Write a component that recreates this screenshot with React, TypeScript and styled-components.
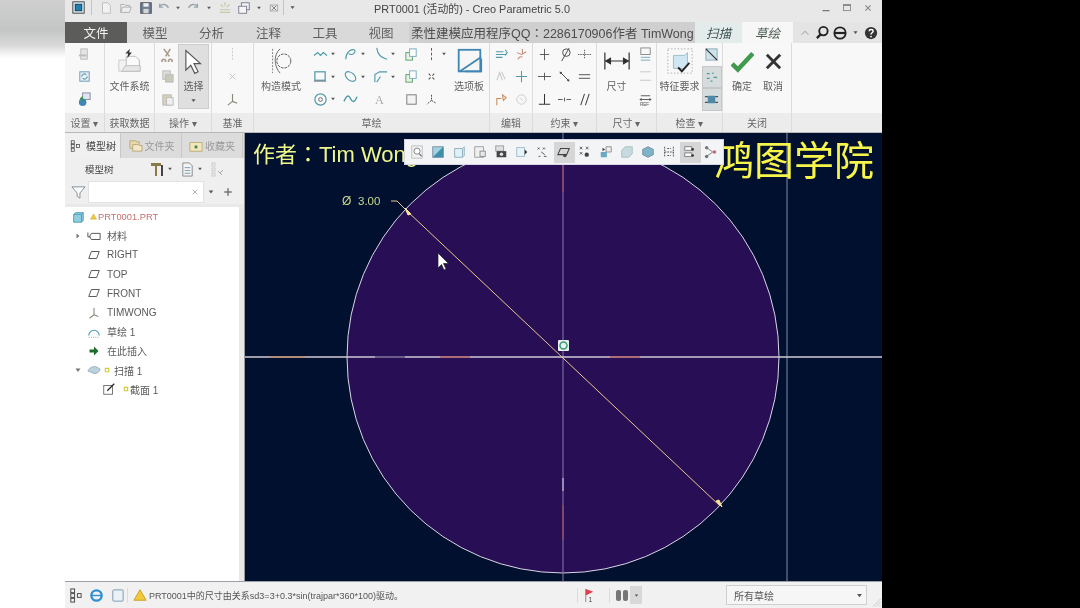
import React from "react";
import styled, { createGlobalStyle } from "styled-components";

const GlobalStyle = createGlobalStyle`
  html, body { margin: 0; padding: 0; background: #000; }
  body { font-family: "Liberation Sans", "Noto Sans CJK SC", sans-serif; }
  * { box-sizing: border-box; }
`;

const BLUE = "#3f86b4";
const TEAL = "#4e9aa8";

const icons: Record<string, React.ReactNode> = {
  app: (<><rect x="1" y="1" width="14" height="14" fill="#cfe0ea" stroke="#333" /><rect x="4" y="4" width="8" height="8" fill="#1f7fb5" stroke="#134" /></>),
  newFile: <path d="M4 2h6l3 3v9H4z" fill="#f2f2f2" stroke="#b9b9b9" />,
  open: <path d="M2 13V4h4l1 1h5v2M2 13l2-6h10l-2 6z" fill="#eee" stroke="#aaa" />,
  save: (<><rect x="2" y="2" width="12" height="12" fill="#6d7f95" stroke="#445" /><rect x="5" y="2.5" width="6" height="4" fill="#eee" /><rect x="5" y="9" width="6" height="5" fill="#d5d5d5" /></>),
  undo: <path d="M3 6c3-3 8-3 10 2M3 3v4h4" fill="none" stroke="#9aa5ad" strokeWidth="1.5" />,
  redo: <path d="M13 6c-3-3-8-3-10 2M13 3v4H9" fill="none" stroke="#9aa5ad" strokeWidth="1.5" />,
  regen: <path d="M8 1v5M3 4l3 3M13 4l-3 3M2 10h12M2 13h12" fill="none" stroke="#c8c8a8" strokeWidth="1.3" />,
  windows: (<><rect x="5" y="2" width="9" height="8" fill="#eef3f5" stroke="#778" /><rect x="2" y="6" width="9" height="8" fill="#f5f5f5" stroke="#778" /></>),
  closeWin: (<><rect x="3" y="4" width="10" height="8" fill="none" stroke="#999" /><path d="M5 5l6 6M11 5l-6 6" stroke="#666" /></>),
  winMin: <path d="M4 11h8" stroke="#777" strokeWidth="1.4" />,
  winMax: (<><rect x="4" y="4" width="8" height="7" fill="none" stroke="#888" /><path d="M4 5h8" stroke="#888" strokeWidth="1.4" /></>),
  winClose: <path d="M5 5l6 6M11 5l-6 6" stroke="#888" strokeWidth="1.3" />,
  caret: <path d="M5 6h6l-3 4z" fill="#555" />,
  tri: <path d="M5 3l6 5-6 5z" fill="#777" />,
  triDown: <path d="M3 5h10l-5 7z" fill="#777" />,
  search: (<><circle cx="9" cy="6.5" r="4.5" fill="none" stroke="#222" strokeWidth="2" /><path d="M6 10l-4 4" stroke="#222" strokeWidth="2.4" /></>),
  globe: (<><circle cx="8" cy="8" r="6.5" fill="none" stroke="#222" strokeWidth="2" /><path d="M2 8h12" stroke="#222" strokeWidth="2.5" /></>),
  help: (<><circle cx="8" cy="8" r="7" fill="#333" /><path d="M5.8 6c.2-2.6 4.6-2.6 4.6 0 0 1.7-2.4 1.7-2.4 3.6" fill="none" stroke="#fff" strokeWidth="1.7" /><circle cx="8" cy="12" r="1" fill="#fff" /></>),
  up: <path d="M4 10l4-4 4 4" fill="none" stroke="#aaa" strokeWidth="1.2" />,
  regenGrey: (<><rect x="4" y="2" width="7" height="11" fill="#e4e4e4" stroke="#bbb" /><path d="M2 9h8" stroke="#bbb" strokeWidth="2" /></>),
  refresh: (<><rect x="3" y="3" width="10" height="10" fill="#e8eef2" stroke="#6a9ab8" /><path d="M5 8a3 3 0 0 1 5-2M11 8a3 3 0 0 1-5 2" fill="none" stroke="#2f7fa8" /></>),
  setup: (<><rect x="6" y="1" width="8" height="7" fill="#dfe7ec" stroke="#88a" /><circle cx="6" cy="11" r="4" fill={BLUE} /><path d="M3 7l3-3v6z" fill="#3a8f48" /></>),
  fileSys: (<><path d="M3 14h22v12H3z" fill="#f2f2f2" stroke="#ccc" /><path d="M11 10h10l4 4v8H11z" fill="#fafafa" stroke="#bbb" /><path d="M10 20h16v6H6z" fill="#e6e6e6" stroke="#bbb" /><path d="M15 2l-5 5h3l-1 5 5-6h-3l1-4z" fill="#333" /></>),
  scissors: <path d="M4 2l6 8M11 2L6 10M4 13a2 2 0 1 0 .1 0M11 13a2 2 0 1 0 .1 0" fill="none" stroke="#a89a8a" strokeWidth="1.7" />,
  copy: (<><rect x="3" y="2" width="8" height="9" fill="#ddd" stroke="#bbb" /><rect x="6" y="6" width="8" height="8" fill="#c9c9b9" stroke="#bbb" /></>),
  paste: (<><rect x="3" y="3" width="9" height="11" fill="#d8cfb8" stroke="#bbb" /><rect x="7" y="6" width="7" height="8" fill="#eee" stroke="#bbb" /></>),
  pointer: <path d="M6 2v24l6-6 5 10 4-2-5-10h8z" fill="#fff" stroke="#555" strokeWidth="1.4" />,
  dashV: <path d="M8 1v14" stroke="#c9c9c9" strokeDasharray="2 1.5" />,
  xSmall: <path d="M5 5l6 6M11 5l-6 6" stroke="#c4c4c4" />,
  csys: <path d="M8 2v8M8 10l5 2M8 10l-5 4" fill="none" stroke="#887" strokeWidth="1.2" />,
  construct: (<><path d="M6 2v26" stroke="#777" strokeDasharray="2 1.5" /><path d="M14 2C7 8 7 20 14 28" fill="none" stroke="#666" /><circle cx="18" cy="15" r="7.5" fill="none" stroke="#555" strokeDasharray="3 1" /></>),
  line: <path d="M1 9l4-3 3 3 3-3 4 3" fill="none" stroke={TEAL} strokeWidth="1.3" />,
  arc: <path d="M3 13C3 6 8 2 12 3c2 1 0 5-3 5-2 0-3-1-3-1" fill="none" stroke={TEAL} strokeWidth="1.2" />,
  fillet: <path d="M4 1c1 8 5 11 11 12" fill="none" stroke={TEAL} strokeWidth="1.2" />,
  offset: (<><rect x="2" y="6" width="7" height="8" fill="#e7f1e4" stroke="#5ba06b" /><rect x="6" y="2" width="7" height="8" fill="#fff" stroke="#7ab" /></>),
  centerLine: <path d="M8 1v14" stroke="#555" strokeDasharray="3 2" />,
  rect: (<><rect x="2" y="3" width="11" height="9" fill="none" stroke={TEAL} strokeWidth="1.3" /><path d="M1 13h13" stroke="#777" /></>),
  ellipse: <ellipse cx="8" cy="8" rx="6.5" ry="4" transform="rotate(40 8 8)" fill="none" stroke={TEAL} strokeWidth="1.2" />,
  chamfer: <path d="M2 14V6l5-3h8M8 8l-4 6" fill="none" stroke={TEAL} strokeWidth="1.2" />,
  cross: <path d="M5 5l2 2M11 5L9 7M5 11l2-2M11 11L9 9" stroke="#555" strokeWidth="1.1" />,
  circleC: (<><circle cx="8" cy="8" r="6" fill="none" stroke={TEAL} strokeWidth="1.3" /><circle cx="8" cy="8" r="2" fill="none" stroke="#666" /></>),
  spline: <path d="M1 10c3-7 5-7 7-3s4 5 7-2" fill="none" stroke={TEAL} strokeWidth="1.5" />,
  text: <text x="2" y="13" fontSize="13" fontFamily="Liberation Serif, serif" fill="#aaa">A</text>,
  sqr: <rect x="3" y="3" width="10" height="10" fill="#f3f3f3" stroke="#777" />,
  axes: <path d="M8 3v6M8 9l5 3M8 9l-5 4" fill="none" stroke="#444" strokeDasharray="2 1" />,
  palette: (<><rect x="3" y="2" width="24" height="24" fill="#f6f6f6" stroke={BLUE} strokeWidth="2" /><path d="M4 26L28 10M10 26h18V12" fill="none" stroke={BLUE} strokeWidth="2" /></>),
  mirror: <path d="M2 5h8M2 8h10M2 11h7M12 3l2 3-2 3" fill="none" stroke={TEAL} strokeWidth="1.2" />,
  divide: <path d="M9 2v6M3 6l5 2 5-3M4 13c2-3 4-3 5-2" fill="none" stroke="#c98a78" strokeWidth="1.1" />,
  trim: <path d="M3 12l3-8 3 8M8 3l4 8" fill="none" stroke="#c8c8c8" strokeWidth="1.1" />,
  plusTeal: <path d="M8 2v12M2 8h12" stroke={TEAL} strokeWidth="1.1" />,
  corner: <path d="M3 14V7h5M9 3l4 3-3 3z" fill="none" stroke="#c98a58" strokeWidth="1.1" />,
  rotate: (<><circle cx="8" cy="8" r="5" fill="none" stroke="#ccc" /><path d="M6 6l4 4" stroke="#ccc" /></>),
  vert: <path d="M8 2v12M3 8h10" stroke="#444" strokeWidth=".9" />,
  tangent: (<><circle cx="10" cy="6" r="4" fill="none" stroke="#444" /><path d="M13 1L5 15" stroke="#444" /></>),
  mid: <path d="M1 8h14M8 3v10" stroke="#555" strokeDasharray="1.5 1" />,
  horiz: <path d="M1 8h14M8 4v8" stroke="#444" strokeWidth=".9" />,
  coinc: (<><path d="M3 3l10 10" stroke="#444" /><circle cx="4" cy="4" r="1.2" fill="#444" /><circle cx="12" cy="12" r="1.2" fill="#444" /></>),
  equal: <path d="M2 6h12M2 10h12" stroke="#777" strokeWidth="1.1" />,
  perp: <path d="M8 2v11M2 13h12" stroke="#333" strokeWidth="1.1" />,
  sym: <path d="M1 8h5M10 8h5M8 6v4" stroke="#555" />,
  parallel: <path d="M4 14l4-12M9 14l4-12" stroke="#444" strokeWidth="1.1" />,
  dimension: <path d="M2 6v18M28 6v18M3 15h24M3 15l5-3v6zM27 15l-5-3v6z" fill="#222" stroke="#333" strokeWidth="1.3" />,
  perim: (<><rect x="3" y="1" width="10" height="7" fill="none" stroke="#888" /><path d="M3 11h10M3 14h10" stroke="#7ab" /></>),
  baseline: <path d="M2 12h12M2 3h12" stroke="#c8c8c8" />,
  ref: (<><path d="M3 4h10M4 7l-2 1 2 1M12 7l2 1-2 1M2 8h12" stroke="#555" fill="none" /><text x="2" y="15" fontSize="5" fontFamily="Liberation Sans, sans-serif" fill="#555">REF</text></>),
  feature: (<><rect x="2" y="2" width="26" height="26" fill="none" stroke="#aaa" strokeDasharray="1.5 2" /><path d="M8 9h12l3-3v14l-3 3H8z" fill="#cfe6f3" stroke="#9bc" /><path d="M13 22l4 4 8-9" fill="none" stroke="#222" strokeWidth="2" /></>),
  inspect1: (<><rect x="2" y="2" width="12" height="12" fill="#cfe2ea" stroke="#8ab" /><path d="M2 2l12 12" stroke="#333" strokeWidth="1.3" /></>),
  inspect2: <path d="M3 5h3M3 10h3M9 4l1 1M10 9h4M7 13h2" stroke="#4e9aa8" strokeWidth="1.4" />,
  inspect3: (<><rect x="4" y="4" width="8" height="8" fill="#4e8aa8" /><path d="M1 5h3M1 11h3M12 5h3M12 11h3" stroke="#222" /></>),
  ok: <path d="M1 12l5 5L19 3" fill="none" stroke="#3f9a4e" strokeWidth="4" />,
  cancel: <path d="M3 3l14 14M17 3L3 17" stroke="#333" strokeWidth="3" />,
  treeTab: (<><rect x="3" y="1" width="4" height="4" fill="none" stroke="#444" /><rect x="3" y="6" width="4" height="4" fill="none" stroke="#444" /><rect x="3" y="11" width="4" height="4" fill="none" stroke="#444" /><rect x="10" y="6" width="4" height="4" fill="none" stroke="#444" /></>),
  folders: (<><path d="M2 3h6l1 1h3v7H2z" fill="#e9d8a8" stroke="#b8a878" /><path d="M5 7h6l1 1h3v6H5z" fill="#f1e6c8" stroke="#b8a878" /></>),
  favorites: (<><path d="M1 4h14v10H1z" fill="#f3e6b8" stroke="#b8a878" /><circle cx="8" cy="9" r="1.8" fill="#3c8a5a" /></>),
  tools: (<><path d="M2 2h10v3H8v10H6V5H2z" fill="#8a7a4a" /><path d="M12 4h2v11h-2z" fill="#444" /></>),
  list: (<><path d="M3 1h7l3 3v11H3z" fill="#f4f4f4" stroke="#888" /><path d="M5 6h6M5 9h6M5 12h6" stroke="#7a9ab0" /></>),
  treeOff: (<><rect x="2" y="2" width="3" height="3" fill="none" stroke="#ccc" /><rect x="2" y="7" width="3" height="3" fill="none" stroke="#ccc" /><rect x="2" y="12" width="3" height="3" fill="none" stroke="#ccc" /><path d="M8 10l4 4M13 9l-3 3" stroke="#aaa" /></>),
  funnel: <path d="M1 2h14L9.5 8.5V14L6.5 12V8.5z" fill="#fff" stroke="#7e8b96" />,
  xGrey: <path d="M5 5l6 6M11 5l-6 6" stroke="#999" />,
  plusGrey: <path d="M8 3v10M3 8h10" stroke="#777" strokeWidth="2" />,
  part: <path d="M3 5l2-2h9v9l-2 2H3zM3 5h9v9M12 5l2-2" fill="#8fcde0" stroke="#4a9cb5" />,
  warn: <path d="M8 2l7 12H1z" fill="#f0c93c" stroke="#c79a1c" />,
  tag: <path d="M1 4v5h3M5 5h10v7H5L3 8.5z" fill="none" stroke="#444" />,
  plane: <path d="M5 4h9l-3 8H2z" fill="none" stroke="#555" strokeWidth="1.1" />,
  sketch: (<><path d="M2 12a6 6 0 0 1 12 0" fill="none" stroke="#4a9cb5" strokeWidth="1.3" /><path d="M2 14h12" stroke="#888" strokeDasharray="1 1.5" /></>),
  insert: <path d="M2 6h6V2l6 6-6 6v-4H2z" fill="#1f6b2c" />,
  sweep: <path d="M1 9c2-4 5-5 9-5l5 3c-1 4-4 5-7 5z" fill="#b9d2dc" stroke="#9ab" />,
  section: (<><rect x="2" y="4" width="10" height="10" fill="#fff" stroke="#666" /><path d="M6 10l8-8" stroke="#222" strokeWidth="1.5" /></>),
  star: <path d="M2 2h12v12H2z M5 5h6v6H5z" fill="#d3c93a" fillRule="evenodd" />,
  tbZoom: (<><rect x="2" y="1" width="12" height="14" fill="#f2f2f2" stroke="#bbb" /><circle cx="8" cy="7" r="3.5" fill="#fff" stroke="#777" /><path d="M10.5 10l3 3" stroke="#777" strokeWidth="1.4" /></>),
  tbFit: (<><rect x="2" y="2" width="12" height="12" fill="#9ed2e4" stroke="#789" /><path d="M2 14L14 2v12z" fill="#3f8fa8" /></>),
  tbBox: <path d="M3 4h9l2-2v10l-2 2H3zM12 4v10" fill="#dff0f6" stroke="#8ab" />,
  tbSheet: (<><rect x="2" y="2" width="10" height="12" fill="#f0f0f0" stroke="#999" /><rect x="8" y="7" width="6" height="6" fill="#e8e8e8" stroke="#888" /></>),
  tbCam: (<><rect x="2" y="1" width="9" height="6" fill="#e0e0e0" stroke="#999" /><rect x="3" y="7" width="11" height="7" fill="#444" /><circle cx="8.5" cy="10.5" r="2" fill="#ddd" /></>),
  tbPlay: (<><rect x="2" y="3" width="9" height="10" fill="#e7f3f7" stroke="#9bc" /><path d="M11 5l3 3-3 3z" fill="#333" /></>),
  tbScatter: <path d="M2 3l2 2M4 3L2 5M8 3l2 2M10 3L8 5M6 8l4 3M3 13h2M9 13h3" stroke="#444" />,
  tbPlane: (<><path d="M4 4h10l-3 7H1z" fill="none" stroke="#444" strokeWidth="1.2" /><circle cx="9" cy="12" r="2" fill="#444" /></>),
  tbCross: (<><path d="M2 2l3 3M5 2L2 5M9 2l3 3M12 2L9 5M2 8l3 3M5 8l-3 3" stroke="#555" /><circle cx="10" cy="11" r="2.5" fill="#444" /></>),
  tbSwap: (<><path d="M8 2h6v6H8z" fill="#eee" stroke="#888" /><path d="M2 8h7v6H2z" fill="#66a9c4" /><path d="M4 3l3 2-3 2z" fill="#444" /></>),
  tbSolid: <path d="M2 6l4-4h8v8l-4 4H2z" fill="#c5dbe0" stroke="#aabcc0" />,
  tbCube: <path d="M2 5l6-3 6 3v6l-6 3-6-3z" fill="#7fb3c9" stroke="#6c8a9c" />,
  tbDim: <path d="M3 2v12M13 2v12M3 8h10M6 4h4M6 12h4" stroke="#444" strokeDasharray="2 1" />,
  tbLock: (<><rect x="2" y="2" width="8" height="4" fill="#fff" stroke="#777" /><circle cx="11" cy="5" r="1.5" fill="#333" /><rect x="2" y="9" width="8" height="4" fill="#fff" stroke="#777" /><circle cx="11" cy="12" r="1.5" fill="#333" /></>),
  tbNodes: (<><path d="M3 3l7 5-7 5" fill="none" stroke="#777" /><circle cx="3" cy="3" r="2" fill="#777" /><circle cx="3" cy="13" r="2" fill="#777" /><circle cx="12" cy="8" r="2" fill="#c56a6a" /></>),
  ie: (<><circle cx="8" cy="8" r="5.5" fill="none" stroke="#2f8fd0" strokeWidth="2.5" /><path d="M3 8h10" stroke="#2f8fd0" strokeWidth="1.5" /></>),
  page: <rect x="3" y="2" width="11" height="12" rx="1" fill="#eaf2f6" stroke="#7898b0" />,
  flag: (<><path d="M4 1v14" stroke="#888" /><path d="M4 1l8 3-8 4z" fill="#e0404a" /><text x="7" y="15" fontSize="7" fontFamily="Liberation Sans, sans-serif" fill="#444">1</text></>),
  binoculars: (<><rect x="2" y="3" width="5" height="11" rx="2" fill="#777" /><rect x="9" y="3" width="5" height="11" rx="2" fill="#777" /></>),
  grip: <path d="M4 14L14 4M8 14l6-6M12 14l2-2" stroke="#bbb" />,
};

const Svg = styled.svg<{ $size: number }>`
  width: ${(p) => p.$size}px;
  height: ${(p) => p.$size}px;
  flex: none;
  display: block;
`;

function Ico({ name, size = 14, box = 16 }: { name: string; size?: number; box?: number }) {
  return (
    <Svg $size={size} viewBox={`0 0 ${box} ${box}`}>
      {icons[name]}
    </Svg>
  );
}

const Spacer = styled.span<{ $w: number }>`
  width: ${(p) => p.$w}px;
  flex: none;
`;

/* ---------- page frame ---------- */
const Page = styled.div`
  width: 1080px;
  height: 608px;
  display: flex;
  overflow: hidden;
  background: #000;
`;

const LeftStrip = styled.div`
  width: 65px;
  background: linear-gradient(#cfcfcf 0, #c4c6c5 30px, #d8d8d8 45px, #fff 58px);
`;

const Window = styled.div`
  width: 817px;
  display: flex;
  flex-direction: column;
  background: #f0f0f0;
  filter: blur(0.5px);
`;

/* ---------- title bar ---------- */
const TitleBar = styled.div`
  height: 22px;
  padding-bottom: 7px;
  display: flex;
  align-items: center;
  background: #e7e8e7;
`;

const Quick = styled.div<{ $w: number }>`
  width: ${(p) => p.$w}px;
  display: flex;
  justify-content: center;
  flex: none;
`;

const QuickSep = styled.div`
  width: 1px;
  height: 15px;
  background: #c4c4c4;
  flex: none;
`;

const TitleText = styled.div`
  width: 280px;
  margin-left: 31px;
  text-align: center;
  color: #444;
  font-size: 10.9px;
  white-space: nowrap;
  flex: none;
`;

const WinButtons = styled.div`
  margin-left: 207px;
  display: flex;
  gap: 7px;
`;

/* ---------- tabs ---------- */
const TabStrip = styled.div`
  height: 21px;
  display: flex;
  align-items: stretch;
  background: #e4e4e4;
`;

const Tab = styled.div<{ $w: number; $kind?: string }>`
  width: ${(p) => p.$w}px;
  flex: none;
  display: flex;
  align-items: center;
  justify-content: center;
  white-space: nowrap;
  font-size: 12.5px;
  color: #5e5e5e;
  ${(p) => p.$kind === "file" && "background:#5c5c5a;color:#f2f2f2;"}
  ${(p) => p.$kind === "plain" && "background:#d9d9d9;"}
  ${(p) => p.$kind === "long" && `background:#cfcfcf;color:#4c4c4c;justify-content:flex-start;padding-left:2px;font-family:"Liberation Sans","Noto Sans CJK TC",sans-serif;`}
  ${(p) => p.$kind === "sweep" && "background:#e3ebeb;font-style:italic;color:#3c5050;"}
  ${(p) => p.$kind === "active" && "background:#f7f7f7;font-style:italic;color:#4b5a50;"}
`;

const TabTools = styled.div`
  display: flex;
  align-items: center;
  gap: 3px;
  padding-left: 5px;
`;

/* ---------- ribbon ---------- */
const Ribbon = styled.div`
  height: 90px;
  display: flex;
  background: #f8f8f8;
  border-bottom: 1px solid #b8b8b8;
`;

const Group = styled.div<{ $w: number; $flat?: boolean }>`
  width: ${(p) => p.$w}px;
  flex: none;
  display: flex;
  flex-direction: column;
  border-right: ${(p) => (p.$flat ? "none" : "1px solid #dcdcdc")};
`;

const GroupBody = styled.div<{ $start?: boolean }>`
  height: 70px;
  display: flex;
  justify-content: ${(p) => (p.$start ? "flex-start" : "center")};
`;

const GroupLabel = styled.div`
  flex: 1;
  background: #ececec;
  display: flex;
  align-items: center;
  justify-content: center;
  color: #666;
  font-size: 10px;
  white-space: nowrap;
`;

const IconCol = styled.div<{ $w?: number; $ml?: number }>`
  width: ${(p) => p.$w ?? 20}px;
  margin-left: ${(p) => p.$ml ?? 0}px;
  flex: none;
  display: flex;
  flex-direction: column;
`;

const IconCell = styled.div<{ $on?: boolean }>`
  height: 22.5px;
  display: flex;
  align-items: center;
  justify-content: center;
  background: ${(p) => (p.$on ? "#d6dbdc" : "transparent")};
  outline: ${(p) => (p.$on ? "1px solid #c4c8c8" : "none")};
  outline-offset: -1px;
`;

const SketchRow = styled.div`
  height: 22.5px;
  display: grid;
  grid-template-columns: 30px 30px 31px 20px 28px;
  align-items: center;
  justify-items: start;
`;

const WithCaret = styled.div`
  display: flex;
  align-items: center;
`;

const BigButton = styled.div<{ $w: number }>`
  width: ${(p) => p.$w}px;
  flex: none;
  display: flex;
  flex-direction: column;
  align-items: center;
`;

const BigIcon = styled.div`
  height: 36px;
  display: flex;
  align-items: center;
  justify-content: center;
`;

const BigLabel = styled.div`
  height: 16px;
  line-height: 16px;
  font-size: 10px;
  color: #606060;
  white-space: nowrap;
`;

const SelectButton = styled(BigButton)`
  margin: 1px 0 2px;
  height: 65px;
  background: #dedfde;
  border: 1px solid #cdcdcd;

  ${BigIcon} {
    height: 34px;
  }
`;

function Small({ name, on }: { name: string; on?: boolean }) {
  return (
    <IconCell $on={on}>
      <Ico name={name} size={15} />
    </IconCell>
  );
}

function Big({ w, icon, size, box, label }: { w: number; icon: string; size: number; box: number; label: string }) {
  return (
    <BigButton $w={w}>
      <BigIcon>
        <Ico name={icon} size={size} box={box} />
      </BigIcon>
      <BigLabel>{label}</BigLabel>
    </BigButton>
  );
}

const sketchRows: [string, boolean][][] = [
  [["line", true], ["arc", true], ["fillet", true], ["offset", false], ["centerLine", true]],
  [["rect", true], ["ellipse", true], ["chamfer", true], ["offset", false], ["cross", false]],
  [["circleC", true], ["spline", false], ["text", false], ["sqr", false], ["axes", false]],
];

/* ---------- main area ---------- */
const Main = styled.div`
  height: 448px;
  display: flex;
`;

const Sidebar = styled.div`
  width: 180px;
  flex: none;
  display: flex;
  flex-direction: column;
  background: #e9e9e9;
  border-right: 1px solid #9a9a9a;
`;

const SideTabs = styled.div`
  height: 25px;
  display: flex;
  background: #dcdcdc;
`;

const SideTab = styled.div<{ $w: number; $on?: boolean }>`
  width: ${(p) => p.$w}px;
  display: flex;
  align-items: center;
  justify-content: center;
  gap: ${(p) => (p.$on ? "5px" : "2px")};
  font-size: 10px;
  color: ${(p) => (p.$on ? "#444" : "#9a9a9a")};
  background: ${(p) => (p.$on ? "#f0f0f0" : "#dcdcdc")};
  border-right: 1px solid #c8c8c8;
  white-space: nowrap;
  overflow: hidden;
`;

const SideTools = styled.div`
  height: 22px;
  display: flex;
  align-items: center;
  padding-left: 20px;
  background: #efefef;
  color: #444;
  font-size: 9.5px;
`;

const SideToolsTitle = styled.div`
  width: 64px;
`;

const FilterRow = styled.div`
  height: 24px;
  display: flex;
  align-items: center;
  padding-left: 6px;
  gap: 1px;
  background: #efefef;
`;

const FilterInput = styled.div`
  width: 116px;
  height: 22px;
  margin-left: 1px;
  background: #fff;
  border: 1px solid #e2e2e2;
  display: flex;
  align-items: center;
  justify-content: flex-end;
  padding-right: 2px;
`;

const Tree = styled.div`
  flex: 1;
  margin: 3px 5px 0 0;
  background: #fff;
`;

const TreeRow = styled.div`
  height: 19.2px;
  display: flex;
  align-items: center;
  font-size: 10px;
  color: #5a5a5a;
  white-space: nowrap;
`;

const Arrow = styled.div`
  width: 8px;
  margin-left: 9px;
  margin-right: 4px;
  display: flex;
  justify-content: center;
  flex: none;
`;

const RowIcon = styled.div<{ $ml?: number; $mr?: number }>`
  width: 16px;
  margin-left: ${(p) => p.$ml ?? 0}px;
  margin-right: ${(p) => p.$mr ?? 5}px;
  display: flex;
  justify-content: center;
  flex: none;
`;

const PartName = styled.span`
  color: #c56f6f;
  font-size: 9.3px;
`;

const Canvas = styled.div`
  flex: 1;
  position: relative;
  background: #02102f;
`;

const Drawing = styled.svg`
  display: block;
  width: 637px;
  height: 448px;
`;

const Author = styled.div`
  position: absolute;
  left: 8px;
  top: 6px;
  color: #eef78a;
  font-size: 22px;
  line-height: 32px;
  white-space: nowrap;
  font-family: "Liberation Sans", "Noto Sans CJK TC", sans-serif;
`;

const School = styled.div`
  position: absolute;
  right: 8px;
  top: 1px;
  color: #f7f54a;
  font-size: 40px;
  line-height: 48px;
  white-space: nowrap;
  font-family: "Noto Sans CJK SC", sans-serif;
`;

const FloatBar = styled.div`
  position: absolute;
  left: 159px;
  top: 6px;
  width: 320px;
  height: 26px;
  display: flex;
  align-items: center;
  padding-left: 1.5px;
  background: #f3f4f6;
  border: 1px solid #d9d5e6;
`;

const FloatCell = styled.div<{ $on?: boolean }>`
  width: 21px;
  height: 21px;
  flex: none;
  display: flex;
  align-items: center;
  justify-content: center;
  background: ${(p) => (p.$on ? "#d6d6d6" : "transparent")};
`;

/* ---------- status bar ---------- */
const StatusBar = styled.div`
  flex: 1;
  display: flex;
  align-items: center;
  background: #f1f1f1;
  border-top: 1px solid #9aa0a6;
`;

const StatusIcons = styled.div`
  width: 63px;
  flex: none;
  padding-left: 3px;
  display: flex;
  gap: 6px;
  border-right: 1px solid #dcdcdc;
`;

const Message = styled.div`
  width: 449px;
  flex: none;
  padding-left: 5px;
  display: flex;
  align-items: center;
  gap: 2px;
  font-size: 9px;
  color: #555;
  white-space: nowrap;
`;

const FlagCell = styled.div`
  width: 33px;
  flex: none;
  padding-left: 4px;
  display: flex;
  border-left: 1px solid #dcdcdc;
  border-right: 1px solid #dcdcdc;
`;

const FindCell = styled.div`
  width: 44px;
  flex: none;
  padding-left: 4px;
  display: flex;
  align-items: center;
`;

const FindCaret = styled.div`
  width: 12px;
  height: 18px;
  background: #d8d8d8;
  display: flex;
  align-items: center;
  justify-content: center;
`;

const FilterSelect = styled.div`
  width: 142px;
  height: 20px;
  margin-left: 72px;
  padding-left: 7px;
  display: flex;
  align-items: center;
  justify-content: space-between;
  background: #f6f6f6;
  border: 1px solid #cfcfcf;
  font-size: 10px;
  color: #555;
`;

const Grip = styled.div`
  margin-left: 3px;
  align-self: flex-end;
`;

const floatIcons: [string, boolean?][] = [
  ["tbZoom"], ["tbFit"], ["tbBox"], ["tbSheet"], ["tbCam"], ["tbPlay"], ["tbScatter"], ["tbPlane", true],
  ["tbCross"], ["tbSwap"], ["tbSolid"], ["tbCube"], ["tbDim"], ["tbLock", true], ["tbNodes"],
];

export default function App() {
  return (
    <Page>
      <GlobalStyle />
      <LeftStrip />
      <Window>
        <TitleBar>
          <Quick $w={26}><Ico name="app" size={13} /></Quick>
          <QuickSep />
          <Spacer $w={4} />
          <Quick $w={19}><Ico name="newFile" /></Quick>
          <Quick $w={21}><Ico name="open" /></Quick>
          <Quick $w={19}><Ico name="save" /></Quick>
          <Quick $w={18}><Ico name="undo" /></Quick>
          <Quick $w={10}><Ico name="caret" size={10} /></Quick>
          <Quick $w={20}><Ico name="redo" /></Quick>
          <Quick $w={12}><Ico name="caret" size={10} /></Quick>
          <Quick $w={20}><Ico name="regen" /></Quick>
          <Quick $w={17}><Ico name="windows" /></Quick>
          <Quick $w={13}><Ico name="caret" size={10} /></Quick>
          <Quick $w={18}><Ico name="closeWin" size={12} /></Quick>
          <QuickSep />
          <Quick $w={17}><Ico name="caret" size={11} /></Quick>
          <TitleText>PRT0001 (活动的) - Creo Parametric 5.0</TitleText>
          <WinButtons>
            <Ico name="winMin" />
            <Ico name="winMax" />
            <Ico name="winClose" />
          </WinButtons>
        </TitleBar>

        <TabStrip>
          <Tab $w={62} $kind="file">文件</Tab>
          <Tab $w={56} $kind="plain">模型</Tab>
          <Tab $w={57} $kind="plain">分析</Tab>
          <Tab $w={57} $kind="plain">注释</Tab>
          <Tab $w={56} $kind="plain">工具</Tab>
          <Tab $w={56} $kind="plain">视图</Tab>
          <Tab $w={286} $kind="long">柔性建模应用程序QQ：2286170906作者 TimWong</Tab>
          <Tab $w={47} $kind="sweep">扫描</Tab>
          <Tab $w={51} $kind="active">草绘</Tab>
          <TabTools>
            <Ico name="up" size={14} />
            <Ico name="search" size={15} />
            <Ico name="globe" size={14} />
            <Ico name="caret" size={11} />
            <Ico name="help" size={14} />
          </TabTools>
        </TabStrip>

        <Ribbon>
          <Group $w={40}>
            <GroupBody>
              <IconCol>
                <Small name="regenGrey" />
                <Small name="refresh" />
                <Small name="setup" />
              </IconCol>
            </GroupBody>
            <GroupLabel>设置 ▾</GroupLabel>
          </Group>
          <Group $w={50}>
            <GroupBody>
              <Big w={50} icon="fileSys" size={28} box={30} label="文件系统" />
            </GroupBody>
            <GroupLabel>获取数据</GroupLabel>
          </Group>
          <Group $w={57}>
            <GroupBody>
              <IconCol $w={21}>
                <Small name="scissors" />
                <Small name="copy" />
                <Small name="paste" />
              </IconCol>
              <SelectButton $w={31}>
                <BigIcon>
                  <Ico name="pointer" size={26} box={32} />
                </BigIcon>
                <BigLabel>选择</BigLabel>
                <Ico name="caret" size={11} />
              </SelectButton>
            </GroupBody>
            <GroupLabel>操作 ▾</GroupLabel>
          </Group>
          <Group $w={42}>
            <GroupBody>
              <IconCol>
                <Small name="dashV" />
                <Small name="xSmall" />
                <Small name="csys" />
              </IconCol>
            </GroupBody>
            <GroupLabel>基准</GroupLabel>
          </Group>
          <Group $w={236}>
            <GroupBody $start>
              <Big w={54} icon="construct" size={28} box={30} label="构造模式" />
              <IconCol $w={139} $ml={4.5}>
                {sketchRows.map((row, i) => (
                  <SketchRow key={i}>
                    {row.map(([name, hasCaret], j) => (
                      <WithCaret key={j}>
                        <Ico name={name} size={15} />
                        {hasCaret && <Ico name="caret" size={10} />}
                      </WithCaret>
                    ))}
                  </SketchRow>
                ))}
              </IconCol>
              <Big w={35} icon="palette" size={27} box={30} label="选项板" />
            </GroupBody>
            <GroupLabel>草绘</GroupLabel>
          </Group>
          <Group $w={43}>
            <GroupBody>
              <IconCol>
                <Small name="mirror" />
                <Small name="trim" />
                <Small name="corner" />
              </IconCol>
              <IconCol>
                <Small name="divide" />
                <Small name="plusTeal" />
                <Small name="rotate" />
              </IconCol>
            </GroupBody>
            <GroupLabel>编辑</GroupLabel>
          </Group>
          <Group $w={64}>
            <GroupBody>
              <IconCol>
                <Small name="vert" />
                <Small name="horiz" />
                <Small name="perp" />
              </IconCol>
              <IconCol>
                <Small name="tangent" />
                <Small name="coinc" />
                <Small name="sym" />
              </IconCol>
              <IconCol>
                <Small name="mid" />
                <Small name="equal" />
                <Small name="parallel" />
              </IconCol>
            </GroupBody>
            <GroupLabel>约束 ▾</GroupLabel>
          </Group>
          <Group $w={60}>
            <GroupBody>
              <Big w={38} icon="dimension" size={28} box={30} label="尺寸" />
              <IconCol>
                <Small name="perim" />
                <Small name="baseline" />
                <Small name="ref" />
              </IconCol>
            </GroupBody>
            <GroupLabel>尺寸 ▾</GroupLabel>
          </Group>
          <Group $w={66}>
            <GroupBody>
              <Big w={44} icon="feature" size={28} box={30} label="特征要求" />
              <IconCol $w={20}>
                <Small name="inspect1" />
                <Small name="inspect2" on />
                <Small name="inspect3" on />
              </IconCol>
            </GroupBody>
            <GroupLabel>检查 ▾</GroupLabel>
          </Group>
          <Group $w={69}>
            <GroupBody>
              <Big w={32} icon="ok" size={23} box={20} label="确定" />
              <Big w={30} icon="cancel" size={19} box={20} label="取消" />
            </GroupBody>
            <GroupLabel>关闭</GroupLabel>
          </Group>
          <Group $w={90} $flat>
            <GroupBody />
            <GroupLabel />
          </Group>
        </Ribbon>

        <Main>
          <Sidebar>
            <SideTabs>
              <SideTab $w={56} $on><Ico name="treeTab" size={12} />模型树</SideTab>
              <SideTab $w={61}><Ico name="folders" size={15} />文件夹</SideTab>
              <SideTab $w={61}><Ico name="favorites" size={14} />收藏夹</SideTab>
            </SideTabs>
            <SideTools>
              <SideToolsTitle>模型树</SideToolsTitle>
              <Ico name="tools" size={16} />
              <Ico name="caret" size={10} />
              <Spacer $w={5} />
              <Ico name="list" size={15} />
              <Ico name="caret" size={10} />
              <Spacer $w={5} />
              <Ico name="treeOff" size={16} />
            </SideTools>
            <FilterRow>
              <Ico name="funnel" size={15} />
              <FilterInput><Ico name="xGrey" size={12} /></FilterInput>
              <Ico name="caret" size={12} />
              <Spacer $w={3} />
              <Ico name="plusGrey" size={12} />
            </FilterRow>
            <Tree>
              <TreeRow>
                <RowIcon $ml={5} $mr={1}><Ico name="part" size={14} /></RowIcon>
                <Spacer $w={3} />
                <Ico name="warn" size={7} />
                <Spacer $w={1} />
                <PartName>PRT0001.PRT</PartName>
              </TreeRow>
              <TreeRow><Arrow><Ico name="tri" size={8} /></Arrow><RowIcon><Ico name="tag" /></RowIcon>材料</TreeRow>
              <TreeRow><Arrow /><RowIcon><Ico name="plane" /></RowIcon>RIGHT</TreeRow>
              <TreeRow><Arrow /><RowIcon><Ico name="plane" /></RowIcon>TOP</TreeRow>
              <TreeRow><Arrow /><RowIcon><Ico name="plane" /></RowIcon>FRONT</TreeRow>
              <TreeRow><Arrow /><RowIcon><Ico name="csys" /></RowIcon>TIMWONG</TreeRow>
              <TreeRow><Arrow /><RowIcon><Ico name="sketch" /></RowIcon>草绘 1</TreeRow>
              <TreeRow><Arrow /><RowIcon><Ico name="insert" size={12} /></RowIcon>在此插入</TreeRow>
              <TreeRow>
                <Arrow><Ico name="triDown" size={8} /></Arrow>
                <RowIcon $mr={2}><Ico name="sweep" /></RowIcon>
                <Ico name="star" size={6} />
                <Spacer $w={4} />
                扫描 1
              </TreeRow>
              <TreeRow>
                <Arrow />
                <RowIcon $ml={15} $mr={6}><Ico name="section" /></RowIcon>
                <Ico name="star" size={6} />
                <Spacer $w={1} />
                截面 1
              </TreeRow>
            </Tree>
          </Sidebar>
          <Canvas>
            <Drawing viewBox="245 133 637 448">
              <circle cx="563" cy="357" r="216" fill="#280e55" stroke="#d9d6e4" strokeWidth="1" />
              <line x1="563" y1="133" x2="563" y2="581" stroke="#8776b0" />
              <line x1="563" y1="165" x2="563" y2="192" stroke="#a84a68" />
              <line x1="563" y1="505" x2="563" y2="540" stroke="#a84a58" />
              <line x1="563" y1="478" x2="563" y2="491" stroke="#d8d4e4" />
              <line x1="787" y1="133" x2="787" y2="581" stroke="#7c8ba6" />
              <line x1="245" y1="357" x2="882" y2="357" stroke="#d0cbd9" strokeWidth="1.6" />
              <line x1="270" y1="357" x2="305" y2="357" stroke="#b88868" strokeWidth="1.6" />
              <line x1="440" y1="357" x2="470" y2="357" stroke="#b0606a" strokeWidth="1.6" />
              <line x1="375" y1="357" x2="405" y2="357" stroke="#5d4a80" strokeWidth="1.6" />
              <line x1="610" y1="357" x2="640" y2="357" stroke="#b0606a" strokeWidth="1.6" />
              <path d="M391 201h6l10 10 313 295" fill="none" stroke="#e4c88c" strokeWidth="1" />
              <path d="M405 208l6 6-3 1z M722 507l-6-6 3-1z" fill="#f5e3a0" stroke="#f5e3a0" />
              <text x="342" y="205" fill="#c8d88c" fontSize="12" fontFamily="Liberation Sans, sans-serif">Ø</text>
              <text x="358" y="205" fill="#c8d88c" fontSize="11.5" fontFamily="Liberation Sans, sans-serif">3.00</text>
              <rect x="558" y="340" width="11" height="11" rx="1" fill="#e8f0ee" />
              <circle cx="563.5" cy="345.5" r="3.5" fill="none" stroke="#3d9a7a" strokeWidth="1.5" />
              <path d="M438 253v15l3.5-3.5 2.5 5.500 2-1-2.500-5.500h5z" fill="#fff" stroke="#222" strokeWidth=".7" />
            </Drawing>
            <Author>作者：Tim Wong</Author>
            <School>鸿图学院</School>
            <FloatBar>
              {floatIcons.map(([name, on]) => (
                <FloatCell key={name} $on={on}>
                  <Ico name={name} size={14} />
                </FloatCell>
              ))}
            </FloatBar>
          </Canvas>
        </Main>

        <StatusBar>
          <StatusIcons>
            <Ico name="treeTab" size={15} />
            <Ico name="ie" size={15} />
            <Ico name="page" size={15} />
          </StatusIcons>
          <Message>
            <Ico name="warn" size={14} />
            PRT0001中的尺寸由关系sd3=3+0.3*sin(trajpar*360*100)驱动。
          </Message>
          <FlagCell><Ico name="flag" size={15} /></FlagCell>
          <FindCell>
            <Ico name="binoculars" size={16} />
            <FindCaret><Ico name="caret" size={9} /></FindCaret>
          </FindCell>
          <FilterSelect>
            所有草绘
            <Ico name="caret" size={13} />
          </FilterSelect>
          <Grip><Ico name="grip" size={12} /></Grip>
        </StatusBar>
      </Window>
    </Page>
  );
}
